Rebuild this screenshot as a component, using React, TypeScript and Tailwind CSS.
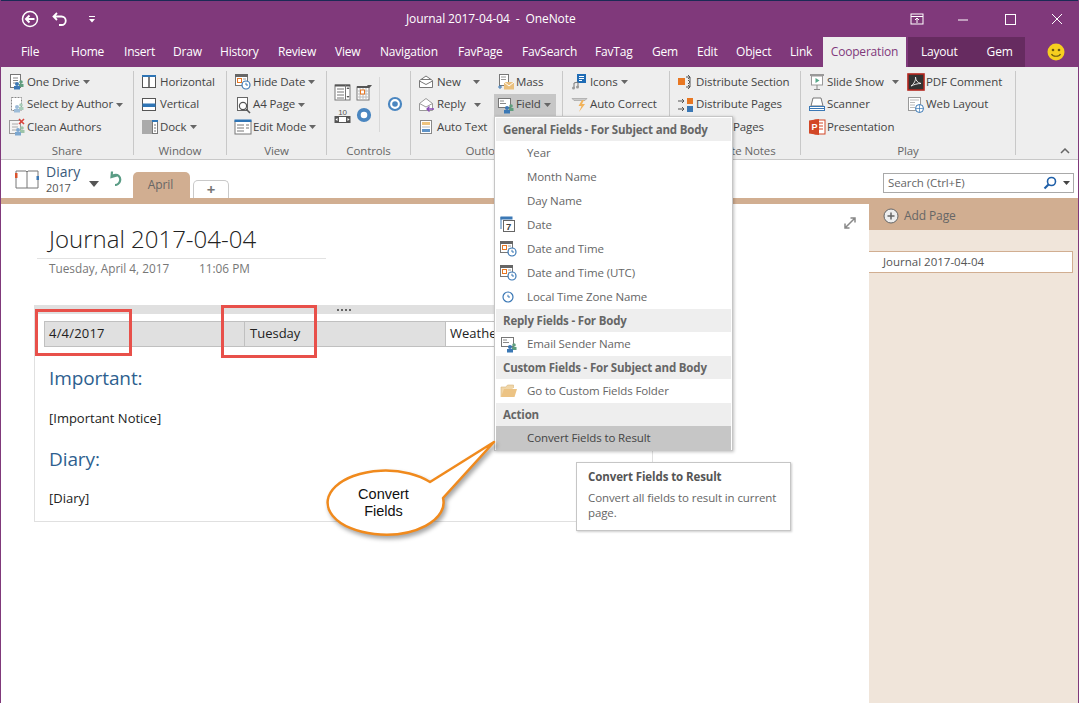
import React from "react";

const Caret = ({ c = "#666", className = "ml-[3px]" }: { c?: string; className?: string }) => (
  <svg width="7" height="4" viewBox="0 0 7 4" className={`shrink-0 ${className}`}><path d="M0 0h7L3.5 4z" fill={c} /></svg>
);

const S = ({ children, w = 18, h = 18 }: { children: React.ReactNode; w?: number; h?: number }) => (
  <svg width={w} height={h} viewBox={`0 0 ${w} ${h}`} className="shrink-0">{children}</svg>
);

const People = ({ x = 9, y = 9, c = "#3b78b5", d = "#5f9e7e" }: { x?: number; y?: number; c?: string; d?: string }) => (
  <g>
    <circle cx={x + 5} cy={y + 1} r="1.8" fill={d} /><rect x={x + 3} y={y + 3} width="4.5" height="3" fill={d} />
    <circle cx={x + 1} cy={y + 3} r="2" fill={c} /><rect x={x - 2} y={y + 5} width="6" height="3.5" fill={c} />
  </g>
);
const DocLines = ({ x = 2, y = 1 }: { x?: number; y?: number }) => (
  <g>
    <rect x={x + 0.5} y={y + 0.5} width="10" height="13" fill="#fff" stroke="#777" />
    <path d={`M${x + 3} ${y + 4}h5M${x + 3} ${y + 6.5}h5M${x + 3} ${y + 9}h3`} stroke="#888" />
  </g>
);
const Clock = ({ x = 12, y = 12, r = 4 }: { x?: number; y?: number; r?: number }) => (
  <g>
    <circle cx={x} cy={y} r={r} fill="#fff" stroke="#3b78b5" strokeWidth="1.2" />
    <path d={`M${x} ${y - 2.2}V${y}H${x + 2}`} stroke="#3b78b5" fill="none" />
  </g>
);
const Cal = ({ x = 1, y = 1 }: { x?: number; y?: number }) => (
  <g>
    <rect x={x + 0.5} y={y + 0.5} width="12" height="11" fill="#fff" stroke="#777" />
    <rect x={x} y={y} width="13" height="3" fill="#666" />
    <rect x={x + 2.5} y={y + 4.5} width="4" height="4" fill="#fff" stroke="#e87722" />
    <path d={`M${x + 8} ${y + 5}h3M${x + 8} ${y + 8}h3`} stroke="#999" />
  </g>
);

const I = {
  oneDrive: <S><DocLines /><People x={8} y={8} /></S>,
  author: <S><rect x="3.5" y="1.5" width="10" height="13" fill="#fff" stroke="#888" strokeDasharray="2 1" /><People x={8} y={8} c="#9dbcd8" d="#a9cdb9" /></S>,
  clean: <S><rect x="1.5" y="2.5" width="11" height="13" fill="#f4f4f4" stroke="#999" /><path d="M4 6h6M4 9h6M4 12h4" stroke="#aaa" /><path d="M11 1l5 5M16 1l-5 5" stroke="#d9433a" strokeWidth="1.6" /><People x={9} y={9} c="#7da7cf" d="#9cc4a8" /></S>,
  horiz: <S w={16}><rect x="1.500" y="2.500" width="13" height="12" fill="#fff" stroke="#555" /><rect x="1" y="2" width="14" height="2" fill="#2f75b5" /><path d="M8 4v11" stroke="#555" strokeWidth="1.5" /></S>,
  vert: <S w={16}><rect x="1.500" y="2.500" width="13" height="12" fill="#fff" stroke="#555" /><rect x="1.5" y="7.5" width="13" height="3.5" fill="#2f75b5" /></S>,
  dock: <S w={17}><rect x="1" y="2" width="10" height="14" fill="#aaa" /><rect x="11.5" y="2.5" width="5" height="13" fill="#fff" stroke="#777" /><rect x="11" y="2" width="6" height="2" fill="#2f75b5" /><path d="M13 7h2M13 10h2M13 13h2" stroke="#777" /></S>,
  hideDate: <S><Cal /><Clock x={12} y={12} /></S>,
  a4: <S><rect x="3.5" y="1.5" width="10" height="13" fill="#fff" stroke="#666" /><circle cx="9" cy="10" r="3.6" fill="#fff" stroke="#555" strokeWidth="1.2" /><path d="M12 13l4 4" stroke="#555" strokeWidth="1.6" /></S>,
  edit: <S><rect x="1" y="3" width="16" height="13" fill="#fff" stroke="#777" /><rect x="0.500" y="1.500" width="17" height="2.5" fill="#2f75b5" /><path d="M3 7h7M3 10h7M3 13h7M12 7h3M12 10h3" stroke="#777" /></S>,
  ctl1: <S w={17} h={17}><rect x="1" y="1" width="15" height="15" fill="#fff" stroke="#777" /><path d="M1 1.500h15" stroke="#555" strokeWidth="2" /><path d="M3 5h7M3 8h7M3 11h7M3 14h7M11.500 1v15" stroke="#777" /><path d="M12.500 5h3l-1.500-2zM12.500 12h3l-1.500 2z" fill="#555" /></S>,
  ctl2: <S w={17} h={17}><rect x="1" y="3" width="12" height="13" fill="#fff" stroke="#777" /><path d="M1 3h12" stroke="#555" strokeWidth="2" /><path d="M1 7h12M1 10h12M1 13h12M4 4v12M7 4v12M10 4v12" stroke="#bbb" /><rect x="4.500" y="6" width="4" height="4" fill="#fff" stroke="#e87722" /><path d="M11 1h5l-2.5 3z" fill="#555" /></S>,
  ctl3: <S w={17} h={17}><text x="8.500" y="7.500" textAnchor="middle" fontSize="8" fill="#555" fontFamily="Liberation Sans">10</text><rect x="0.500" y="9" width="16" height="7" fill="#555" /><rect x="5" y="10" width="7" height="5" fill="#fff" /><path d="M3.500 11v3L1.500 12.500zM13.500 11v3l2-1.500z" fill="#fff" /></S>,
  ring: <S w={16} h={16}><circle cx="8" cy="8" r="5.2" fill="#fff" stroke="#4a86c0" strokeWidth="3.8" /></S>,
  ringDot: <S w={16} h={16}><circle cx="8" cy="8" r="6" fill="#fff" stroke="#4a86c0" strokeWidth="2.2" /><circle cx="8" cy="8" r="2.8" fill="#4a86c0" /></S>,
  mailNew: <S><path d="M1.5 7.5L8 3l6.500 4.500v7h-13z" fill="#fff" stroke="#777" /><path d="M1.5 8L8 11.500 14.500 8M3 6.500h10" fill="none" stroke="#777" /></S>,
  reply: <S><path d="M1.5 7.5L8 2.5l6.5 5v7h-13z" fill="#fff" stroke="#999" /><path d="M1.5 7.5L8 11l6.5-3.5" fill="none" stroke="#999" /><path d="M16 13H9m2.5-2.5L9 13l2.5 2.5" fill="none" stroke="#8a4bb5" strokeWidth="1.3" /></S>,
  autoText: <S><rect x="2.5" y="2.5" width="11" height="13" fill="#fff" stroke="#888" /><rect x="4" y="4" width="8" height="3" fill="#efc47e" /><rect x="4" y="8" width="8" height="2" fill="#ddd" /><rect x="4" y="11" width="8" height="3" fill="#5f93c7" /></S>,
  mass: <S><rect x="2.5" y="1.5" width="9" height="11" fill="#fff" stroke="#777" /><path d="M4 4h5M4 6.5h5" stroke="#999" /><rect x="7" y="9" width="10" height="7.5" fill="#e9bf7d" /><path d="M7 9l5 4 5-4" fill="none" stroke="#fff" /><path d="M1 14h4m-2-2v4" stroke="#3b78b5" /></S>,
  field: <S><rect x="1.5" y="2.5" width="12" height="9" fill="#fff" stroke="#777" /><path d="M3 5h4M3 7.5h6" stroke="#888" /><People x={9} y={9} /></S>,
  icons: <S><rect x="6" y="1" width="9" height="9" fill="#1f6cb5" /><path d="M8 3.5h5M8 5.5h5M8 7.5h3" stroke="#fff" /><path d="M3 10v5M3 10l4-1v5" fill="none" stroke="#777" /><circle cx="2.5" cy="15" r="1.5" fill="#999" /><circle cx="6.5" cy="14" r="1.5" fill="#999" /></S>,
  autoCorrect: <S><path d="M1 2.5h15l-2 2H3z" fill="#ccc" stroke="#999" strokeWidth="0.6" /><path d="M11 4l-3.5 6h3L8 16l6-8h-3l2-4z" fill="#f2b35a" /></S>,
  distSec: <S><rect x="1" y="5" width="7" height="7" fill="#e87722" /><path d="M9 4h4v10H9M11 2l2 2-2 2M11 7l2 2-2 2M11 12l2 2-2 2" fill="none" stroke="#555" /></S>,
  distPages: <S><rect x="10" y="2" width="6" height="6" fill="#e87722" /><rect x="10" y="10" width="6" height="6" fill="#3b78b5" /><path d="M1 5h6M5 3l2 2-2 2M1 13h6M5 11l2 2-2 2" fill="none" stroke="#555" /></S>,
  slide: <S><rect x="2" y="1" width="14" height="2" fill="#999" /><rect x="3.5" y="3" width="11" height="9" fill="#fff" stroke="#999" /><path d="M7.5 5l4 2.5-4 2.5z" fill="#57a88a" /><path d="M9 12v4M6 16.5h6" stroke="#888" /></S>,
  scanner: <S><path d="M5 2h8l2 8H3z" fill="#fff" stroke="#777" /><rect x="1.5" y="10.5" width="15" height="4" fill="#fff" stroke="#3b78b5" /><path d="M2 12.5h14" stroke="#3b78b5" /></S>,
  ppt: <S><rect x="7" y="2" width="10" height="14" fill="#fff" stroke="#d24726" /><path d="M10 5h5M10 8h5M10 11h5" stroke="#d24726" /><path d="M1 2.5L11 1v16L1 15.5z" fill="#d24726" /><text x="3.5" y="12" fontSize="9" fontWeight="700" fill="#fff" fontFamily="Liberation Sans">P</text></S>,
  pdf: <S><rect x="1" y="1" width="16" height="16" fill="#333" stroke="#b3261e" strokeWidth="1.6" /><path d="M4 13c3-2 5-6 4.5-9 0 3 2 6 5.5 6.5-3.5 0-7 1-10 2.500" fill="none" stroke="#e9e9e9" /></S>,
  web: <S><rect x="1.5" y="1.5" width="12" height="13" fill="#fff" stroke="#999" /><path d="M3 4h9M3 6.500h5M3 9h5M3 11.500h5" stroke="#bbb" /><circle cx="12.500" cy="12.500" r="4" fill="#fff" stroke="#3b78b5" /><path d="M8.500 12.500h8M12.500 8.500v8" stroke="#3b78b5" strokeWidth="0.7" /></S>,
  date: <S><rect x="0.500" y="0.500" width="12" height="3" fill="#3b78b5" /><path d="M1 1v12" stroke="#3b78b5" /><rect x="3.500" y="4.500" width="11" height="11" fill="#fff" stroke="#666" /><text x="6" y="14" fontSize="9.500" fontWeight="700" fill="#444" fontFamily="Liberation Sans">7</text></S>,
  dateTime: <S><Cal x={0} y={1} /><Clock x={12} y={12} /></S>,
  clock: <S><Clock x={8} y={9} r={5} /></S>,
  folder: <S w={17}><path d="M1 15V5h5l1.500-2h6v3" fill="#f0d6a8" stroke="#d9b77c" strokeWidth="0.600" /><path d="M1 15l3-8h13l-2.500 8z" fill="#ecc384" /></S>,
};

const Item = ({ icon, text, caret, caretClass, className = "" }: { icon: React.ReactNode; text: string; caret?: boolean; caretClass?: string; className?: string }) => (
  <div className={`flex items-center h-[22.5px] whitespace-nowrap ${className}`}>
    {icon}
    <span className="ml-[1px] mb-[2px]">{text}</span>
    {caret && <Caret className={caretClass} />}
  </div>
);

const Group = ({ label, width, children, last }: { label: string; width: string; children: React.ReactNode; last?: boolean }) => (
  <div className={`flex flex-col shrink-0 h-[84px] mt-[4px] ${width} ${last ? "" : "border-r border-[#c8c8c8]"}`}>
    <div className="flex h-[72px] shrink-0">{children}</div>
    <div className="text-center text-[#666] h-[16px] shrink-0 leading-[16px]">{label}</div>
  </div>
);

const tabs: [string, string][] = [
  ["File", "w-[50px]"], ["Home", "w-[53px]"], ["Insert", "w-[49px]"], ["Draw", "w-[47px]"], ["History", "w-[58px]"],
  ["Review", "w-[57px]"], ["View", "w-[45px]"], ["Navigation", "w-[78px]"], ["FavPage", "w-[64px]"], ["FavSearch", "w-[73px]"],
  ["FavTag", "w-[57px]"], ["Gem", "w-[45px]"], ["Edit", "w-[39px]"], ["Object", "w-[54px]"], ["Link", "w-[33px]"],
];

const MenuHeader = ({ children }: { children: React.ReactNode }) => (
  <div className="h-[23px] leading-[23px] bg-[#eeeeee] pl-[7px] font-bold tracking-[-0.18px] text-[#666]">{children}</div>
);
const MenuItem = ({ icon, children, active }: { icon?: React.ReactNode; children: React.ReactNode; active?: boolean }) => (
  <div className={`h-[24px] flex items-center ${active ? "bg-[#c6c6c6] text-[#444]" : "text-[#666]"}`}>
    <div className="w-[31px] pl-[4px] shrink-0 flex items-center">{icon}</div>
    <span>{children}</span>
  </div>
);

export default function App() {
  return (
    <div className="relative w-[1079px] h-[703px] overflow-hidden bg-white border-x border-[#80397b] font-['Open_Sans','Liberation_Sans',sans-serif] text-[11.5px] tracking-[-0.1px] text-[#444]">
      {/* Title bar */}
      <div className="h-[37px] bg-[#80397b] border-t border-[#1b2a55] flex items-center text-white relative">
        <div className="flex items-center pl-[20px] gap-[13px]">
          <svg width="18" height="18" viewBox="0 0 18 18"><circle cx="9" cy="9" r="7.500" fill="none" stroke="#fff" strokeWidth="1.500" /><path d="M13.500 9H5.500M8.500 5.500L5 9l3.500 3.500" fill="none" stroke="#fff" strokeWidth="2" /></svg>
          <svg width="16" height="16" viewBox="0 0 16 16"><path d="M5 2L1.500 5.500 5 9M2 5.500h7.500a4 4 0 0 1 0 8.500H7" fill="none" stroke="#fff" strokeWidth="1.800" /></svg>
          <svg width="8" height="8" viewBox="0 0 8 8" className="ml-[7px]"><path d="M1 1.500h6" stroke="#fff" /><path d="M1 4h6L4 7.500z" fill="#fff" /></svg>
        </div>
        <div className="absolute left-[405px] top-[10px] whitespace-nowrap text-[12px] leading-[16px]">Journal 2017-04-04&nbsp; - &nbsp;OneNote</div>
        <div className="ml-auto flex items-center pr-[15px]">
          <svg width="14" height="14" viewBox="0 0 14 14" className="mr-[34px]"><rect x="1" y="2" width="12" height="10" fill="none" stroke="#fff" /><path d="M1 4.500h12M7 11V6M5 8l2-2 2 2" fill="none" stroke="#fff" /></svg>
          <svg width="11" height="11" viewBox="0 0 11 11" className="mr-[36px]"><path d="M0 6h10" stroke="#fff" /></svg>
          <svg width="11" height="11" viewBox="0 0 11 11" className="mr-[35px]"><rect x="0.500" y="0.500" width="10" height="10" fill="none" stroke="#fff" /></svg>
          <svg width="12" height="12" viewBox="0 0 12 12"><path d="M1 1l10 10M11 1L1 11" stroke="#fff" /></svg>
        </div>
      </div>

      {/* Tabs */}
      <div className="h-[30px] bg-[#80397b] flex items-stretch text-white text-[12px] pl-[20px] tracking-[-0.2px]">
        {tabs.map(([t, w]) => (
          <div key={t} className={`${w} shrink-0 flex items-center`}>{t}</div>
        ))}
        <div className="w-[83px] flex items-center justify-center bg-[#eeeeee] text-[#80397b]">Cooperation</div>
        <div className="ml-[2px] w-[117px] bg-[#662b60] flex items-center">
          <span className="ml-[13px]">Layout</span>
          <span className="ml-[29px]">Gem</span>
        </div>
        <div className="flex items-center ml-[22px]">
          <svg width="18" height="18" viewBox="0 0 18 18"><circle cx="9" cy="9" r="8.500" fill="#f6cf1f" /><circle cx="6" cy="7" r="1.300" fill="#6b5a10" /><circle cx="12" cy="7" r="1.300" fill="#6b5a10" /><path d="M4.500 11c1.500 3 7.500 3 9 0" fill="none" stroke="#6b5a10" strokeWidth="1.200" /></svg>
        </div>
      </div>

      {/* Ribbon */}
      <div className="h-[93px] bg-[#eeeeee] border-b border-[#c8c8c8] flex relative">
        <Group label="Share" width="w-[133px]">
          <div className="pl-[7px]">
            <Item icon={I.oneDrive} text="One Drive" caret />
            <Item icon={I.author} text="Select by Author" caret />
            <Item icon={I.clean} text="Clean Authors" />
          </div>
        </Group>
        <Group label="Window" width="w-[93px]">
          <div className="pl-[7px]">
            <Item icon={I.horiz} text="Horizontal" className="gap-[2px]" />
            <Item icon={I.vert} text="Vertical" className="gap-[2px]" />
            <Item icon={I.dock} text="Dock" caret className="gap-[1px]" />
          </div>
        </Group>
        <Group label="View" width="w-[100px]">
          <div className="pl-[7px]">
            <Item icon={I.hideDate} text="Hide Date" caret />
            <Item icon={I.a4} text="A4 Page" caret />
            <Item icon={I.edit} text="Edit Mode" caret />
          </div>
        </Group>
        <Group label="Controls" width="w-[84px]">
          <div className="flex pl-[7px] pt-[13px]">
            <div className="grid grid-cols-[17px_17px] gap-x-[5px] gap-y-[5px] w-[40px] h-[40px]">
              {I.ctl1}{I.ctl2}{I.ctl3}{I.ring}
            </div>
            <div className="ml-[5px] w-px h-[55px] mt-[-7px] bg-[#d8d8d8] shrink-0" />
            <div className="ml-[7px] mt-[12px]">{I.ringDot}</div>
          </div>
        </Group>
        <Group label="Outlook" width="w-[152px]">
          <div className="pl-[7px] w-[76px]">
            <Item icon={I.mailNew} text="New" caret caretClass="ml-[12px]" />
            <Item icon={I.reply} text="Reply" caret caretClass="ml-[8px]" />
            <Item icon={I.autoText} text="Auto Text" />
          </div>
          <div className="ml-[10px]">
            <Item icon={I.mass} text="Mass" />
            <div className="h-[22px] bg-[#c6c6c6] w-[62px] ml-[-3px] pl-[3px] flex items-center">{I.field}<span className="ml-[1px] mb-[2px]">Field</span><Caret /></div>
          </div>
        </Group>
        <Group label="" width="w-[107px]">
          <div className="pl-[8px]">
            <Item icon={I.icons} text="Icons" caret />
            <Item icon={I.autoCorrect} text="Auto Correct" />
          </div>
        </Group>
        <Group label="Separate Notes" width="w-[131px]">
          <div className="pl-[7px]">
            <Item icon={I.distSec} text="Distribute Section" />
            <Item icon={I.distPages} text="Distribute Pages" />
            <div className="flex justify-end h-[22.5px] items-center w-[87px]"><span className="mb-[2px] whitespace-nowrap">Pages</span></div>
          </div>
        </Group>
        <Group label="Play" width="w-[215px]">
          <div className="pl-[7px] w-[106px]">
            <Item icon={I.slide} text="Slide Show" caret caretClass="ml-[8px]" />
            <Item icon={I.scanner} text="Scanner" />
            <Item icon={I.ppt} text="Presentation" />
          </div>
          <div>
            <Item icon={I.pdf} text="PDF Comment" />
            <Item icon={I.web} text="Web Layout" />
          </div>
        </Group>
        <svg width="10" height="6" viewBox="0 0 10 6" className="absolute left-[1059px] top-[81px]"><path d="M1 5l4-4 4 4" fill="none" stroke="#666" strokeWidth="1.500" /></svg>
      </div>

      {/* Notebook bar */}
      <div className="h-[38px] flex bg-white">
        <div className="flex items-center pl-[14px] h-full">
          <svg width="24" height="22" viewBox="0 0 24 22"><path d="M1 3h10l1 1 1-1h10v17H1z" fill="#fff" stroke="#777" /><path d="M12 4v16" stroke="#777" /><rect x="0" y="5" width="2.500" height="5" fill="#d9532c" /><rect x="21.500" y="8" width="2.500" height="4" fill="#3b78b5" /></svg>
        </div>
        <div className="ml-[7px] w-[43px] flex flex-col pt-[3px]">
          <div className="text-[14px] leading-[18px] tracking-normal text-[#3a5a7a]">Diary</div>
          <div className="text-[11px] leading-[14px] text-[#555]">2017</div>
        </div>
        <div className="flex items-center pt-[9px] w-[21px]"><svg width="10" height="6" viewBox="0 0 10 6"><path d="M0 0h10L5 6z" fill="#555" /></svg></div>
        <div className="flex items-center w-[18px] pb-[2px]"><svg width="12" height="16" viewBox="0 0 12 16"><path d="M2 1.500L1.500 7 7 5.500M2 6c6-3 9 1 8 5-.5 2.500-3 4-5 4" fill="none" stroke="#5a9c85" strokeWidth="2.200" /></svg></div>
        <div className="self-end ml-[5px] w-[57px] h-[26px] bg-[#d1ae91] rounded-t-[5px] flex items-center justify-center text-[#666] text-[12px] pr-[2px]">April</div>
        <div className="self-end ml-[3px] w-[36px] h-[18px] border-t border-x border-[#c9c9c9] rounded-t-[5px] flex items-center justify-center text-[#777] font-bold text-[15px] leading-none">+</div>
        <div className="ml-auto mr-[4px] mt-[13px] w-[191px] h-[20px] border border-[#a9a9a9] flex items-center pl-[4px] text-[#666]">
          <span>Search (Ctrl+E)</span>
          <svg width="14" height="14" viewBox="0 0 14 14" className="ml-auto"><circle cx="8.500" cy="5.500" r="4" fill="none" stroke="#1f5fa8" strokeWidth="1.600" /><path d="M5.500 8.500L1.500 12.500" stroke="#1f5fa8" strokeWidth="2.200" /></svg>
          <span className="mx-[3px]"><Caret c="#444" /></span>
        </div>
      </div>

      {/* Tan strip */}
      <div className="h-[6px] bg-[#d1ae91]" />

      {/* Body */}
      <div className="flex h-[499px]">
        <div className="w-[868px] shrink-0 relative bg-white">
          <svg width="12" height="12" viewBox="0 0 12 12" className="absolute left-[843px] top-[13px]"><path d="M1.500 10.500l9-9M6.500 1h4.500v4.500M5.500 11H1V6.500" fill="none" stroke="#888" strokeWidth="1.500" /></svg>
          <div className="ml-[36px] w-[289px] h-[55px] border-b border-[#e2e2e2] pl-[12px] flex items-end pb-[1px]">
            <div className="text-[24px] leading-[36px] tracking-normal font-light text-[#222]">Journal 2017-04-04</div>
          </div>
          <div className="ml-[48px] h-[20px] flex items-center text-[11.800px] tracking-normal text-[#777]">
            <span className="w-[150px]">Tuesday, April 4, 2017</span><span>11:06 PM</span>
          </div>
          <div className="ml-[33px] mt-[26px] w-[619px] h-[217px] border-x border-b border-[#e0e0e0]">
            <div className="h-[9px] bg-[#e0e0e0] flex items-center justify-center mr-[-1px]">
              <span className="w-[14px] h-[2px] border-t-2 border-dotted border-[#666]" />
            </div>
            <div className="mt-[7px] ml-[9px] w-[600px] h-[26px] flex border border-[#c0c0c0] text-[13px] tracking-normal text-[#222]">
              <div className="w-[200px] bg-[#e0e0e0] border-r border-[#c0c0c0] flex items-center pl-[4px] tracking-[0.2px]">4/4/2017</div>
              <div className="w-[201px] bg-[#e0e0e0] border-r border-[#c0c0c0] flex items-center pl-[5px]">Tuesday</div>
              <div className="flex-1 flex items-center pl-[4px]">Weather</div>
            </div>
            <div className="ml-[14px] mt-[17px] text-[19px] leading-[28px] text-[#2e5f8f]">Important:</div>
            <div className="ml-[14px] mt-[17px] text-[13px] tracking-normal leading-[18px] text-[#222]">[Important Notice]</div>
            <div className="ml-[14px] mt-[18px] text-[19px] leading-[28px] text-[#2e5f8f]">Diary:</div>
            <div className="ml-[14px] mt-[16px] text-[13px] tracking-normal leading-[18px] text-[#222]">[Diary]</div>
          </div>
        </div>
        <div className="flex-1 bg-[#f0e5da]">
          <div className="h-[26px] bg-[#d1ae91] flex items-center pl-[14px] pb-[2px] text-[#666] text-[12px]">
            <svg width="16" height="16" viewBox="0 0 16 16"><circle cx="8" cy="8" r="7" fill="#eee" stroke="#666" /><path d="M4.500 8h7M8 4.500v7" stroke="#666" strokeWidth="1.500" /></svg>
            <span className="ml-[5px]">Add Page</span>
          </div>
          <div className="mt-[21px] w-[204px] h-[22px] bg-white border-y border-r border-[#d1ae91] pl-[14px] flex items-center tracking-normal text-[#555]">Journal 2017-04-04</div>
        </div>
      </div>

      {/* Field menu */}
      <div className="absolute left-[493px] top-[116px] w-[239px] h-[335px] bg-white border border-[#c6c6c6] p-px shadow-[1px_1px_3px_rgba(0,0,0,0.25)]">
        <MenuHeader>General Fields - For Subject and Body</MenuHeader>
        <MenuItem>Year</MenuItem>
        <MenuItem>Month Name</MenuItem>
        <MenuItem>Day Name</MenuItem>
        <MenuItem icon={I.date}>Date</MenuItem>
        <MenuItem icon={I.dateTime}>Date and Time</MenuItem>
        <MenuItem icon={I.dateTime}>Date and Time (UTC)</MenuItem>
        <MenuItem icon={I.clock}>Local Time Zone Name</MenuItem>
        <MenuHeader>Reply Fields - For Body</MenuHeader>
        <MenuItem icon={I.field}>Email Sender Name</MenuItem>
        <MenuHeader>Custom Fields - For Subject and Body</MenuHeader>
        <MenuItem icon={I.folder}>Go to Custom Fields Folder</MenuItem>
        <MenuHeader>Action</MenuHeader>
        <MenuItem active>Convert Fields to Result</MenuItem>
      </div>

      {/* Tooltip */}
      <div className="absolute left-[575px] top-[462px] w-[215px] h-[69px] bg-white border border-[#c6c6c6] shadow-[1px_1px_2px_rgba(0,0,0,0.2)] px-[11px] pt-[6px] text-[#666]">
        <div className="font-bold leading-[16px] text-[#555]">Convert Fields to Result</div>
        <div className="mt-[5px] leading-[15px]">Convert all fields to result in current page.</div>
      </div>

      {/* Callout */}
      <svg width="180" height="110" viewBox="0 0 180 110" className="absolute left-[319px] top-[435px] drop-shadow-[2px_3px_2px_rgba(0,0,0,0.35)]">
        <path d="M110 47L174 7 123 63A58 32 0 1 1 110 47Z" fill="#fff" stroke="#f08a1d" strokeWidth="2.500" strokeLinejoin="round" />
      </svg>
      <div className="absolute left-[325px] top-[486px] w-[115px] text-center font-['Liberation_Sans',sans-serif] text-[14.500px] leading-[17px] tracking-normal text-[#111]">Convert<br />Fields</div>

      {/* Red annotation boxes */}
      <div className="absolute left-[34px] top-[309px] w-[97px] h-[47px] border-[3px] border-[#e8504a]" />
      <div className="absolute left-[220px] top-[305px] w-[96px] h-[53px] border-[3px] border-[#e8504a]" />
    </div>
  );
}
